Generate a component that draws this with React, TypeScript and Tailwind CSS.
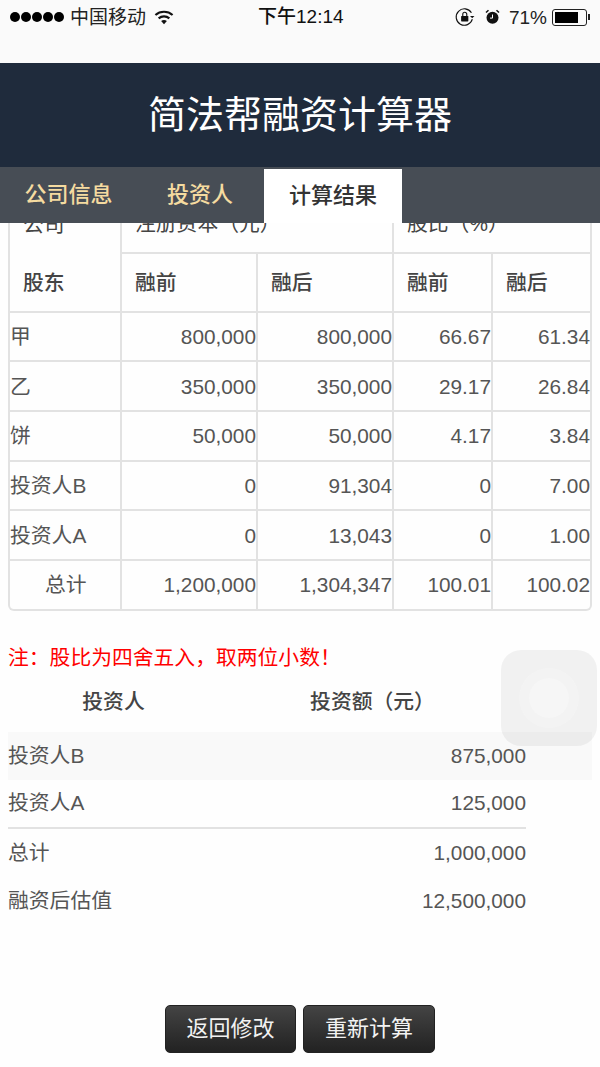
const CJK = "font-['Liberation_Sans','Noto_Sans_CJK_SC',sans-serif]";

const rows = [
  { name: "甲", v: ["800,000", "800,000", "66.67", "61.34"] },
  { name: "乙", v: ["350,000", "350,000", "29.17", "26.84"] },
  { name: "饼", v: ["50,000", "50,000", "4.17", "3.84"] },
  { name: "投资人B", v: ["0", "91,304", "0", "7.00"] },
  { name: "投资人A", v: ["0", "13,043", "0", "1.00"] },
];

const totals = ["1,200,000", "1,304,347", "100.01", "100.02"];

function StatusBar() {
  return (
    <div className="h-[63px] bg-[#fafafa] relative text-[19px] text-[#222]">
      <div className="h-[34px] flex items-center justify-between pl-[10px] pr-[10px]">
        <div className="flex items-center">
          <div className="flex gap-[1px]">
            {[0, 1, 2, 3, 4].map((i) => (
              <div key={i} className="w-[10px] h-[10px] rounded-full bg-black" />
            ))}
          </div>
          <span className="ml-[6px] leading-none">中国移动</span>
          <svg className="ml-[8px]" width="20" height="15" viewBox="0 0 18 14">
            <path d="M1 4.6C5.5.6 12.5.6 17 4.6" fill="none" stroke="#111" strokeWidth="2" />
            <path d="M4 7.8c2.9-2.5 7.1-2.5 10 0" fill="none" stroke="#111" strokeWidth="2" />
            <path d="M6.3 10.2c1.6-1.2 3.8-1.2 5.4 0L9 13.4z" fill="#111" />
          </svg>
        </div>
        <div className="absolute left-[258px] top-[6px] text-[19px] font-medium leading-[22px] text-[#111]">下午12:14</div>
        <div className="flex items-center">
          <svg width="20" height="20" viewBox="0 0 18 18">
            <path d="M14.8 5.2A7.4 7.4 0 1 0 15.6 11" fill="none" stroke="#111" strokeWidth="1" />
            <path d="M13.5 8h4l-2 2.2z" fill="#111" />
            <rect x="5.5" y="8" width="6.5" height="5" rx="0.6" fill="#111" />
            <path d="M7 8V6.5a1.8 1.8 0 0 1 3.6 0V8" fill="none" stroke="#111" strokeWidth="1" />
          </svg>
          <svg className="ml-[10px]" width="15" height="16" viewBox="0 0 15 16">
            <circle cx="7.5" cy="8.8" r="6" fill="#111" />
            <path d="M7.5 5.5v3.6H5" fill="none" stroke="#fff" strokeWidth="1" />
            <path d="M1 3.5 3.5 1.2M14 3.5 11.5 1.2" stroke="#111" strokeWidth="1.5" />
          </svg>
          <span className="ml-[9px] leading-none">71%</span>
          <div className="ml-[5px] w-[35px] h-[17px] rounded-[3px] border border-[#222] p-[2px]">
            <div className="w-[23px] h-full bg-black" />
          </div>
          <div className="ml-[1px] w-[2px] h-[6px] bg-[#222]" />
        </div>
      </div>
    </div>
  );
}

function SharesTable() {
  return (
    <div className="mx-[8px] grid grid-cols-[110px_136px_136px_99px_99px] grid-rows-[58.6px_59px_repeat(5,49.7px)_47.5px] border-2 border-t-0 border-[#e2e2e2] rounded-b-[6px] text-[20.8px] text-[#555]">
      <div className="flex items-center pl-[13px] text-[#444]">公司</div>
      <div className="col-span-2 flex items-center pl-[13px] border-l-2 border-b-2 border-[#e2e2e2] text-[#444]">注册资本（元）</div>
      <div className="col-span-2 flex items-center pl-[13px] border-l-2 border-b-2 border-[#e2e2e2] text-[#444]">股比（%）</div>

      <div className="flex items-center pl-[13px] border-b-2 border-[#e2e2e2] font-medium text-[#444]">股东</div>
      {["融前", "融后", "融前", "融后"].map((x, i) => (
        <div key={i} className="flex items-center pl-[13px] border-l-2 border-b-2 border-[#e2e2e2] font-medium text-[#444]">{x}</div>
      ))}

      {rows.map((r) => (
        <div key={r.name} className="contents">
          <div className="flex items-center border-b-2 border-[#e2e2e2]">{r.name}</div>
          {r.v.map((x, i) => (
            <div key={i} className="flex items-center justify-end border-l-2 border-b-2 border-[#e2e2e2]">{x}</div>
          ))}
        </div>
      ))}

      <div className="flex items-center pl-[35px]">总计</div>
      {totals.map((x) => (
        <div key={x} className="flex items-center justify-end border-l-2 border-[#e2e2e2]">{x}</div>
      ))}
    </div>
  );
}

export default function App() {
  return (
    <div className={`relative w-[600px] h-[1067px] overflow-hidden bg-[#fefefe] ${CJK}`}>
      <StatusBar />
      <div className="h-[104px] bg-[#1f2b3c] text-white text-[38px] flex items-center justify-center">
        简法帮融资计算器
      </div>
      <div className="relative z-10 h-[56px] -mb-[28px] bg-[#474d55] flex items-end pl-[1px] text-[22px] font-medium">
        <div className="h-[56px] pb-[2px] w-[135px] flex items-center justify-center text-[#f5dba0]">公司信息</div>
        <div className="h-[56px] pb-[2px] w-[128px] flex items-center justify-center text-[#f5dba0]">投资人</div>
        <div className="h-[54px] pb-[2px] w-[138px] bg-white flex items-center justify-center text-[#333]">计算结果</div>
      </div>
      <SharesTable />
      <div className="mt-[33px] ml-[8px] text-[20.8px] leading-[28px] text-[#ff0000]">注：股比为四舍五入，取两位小数！</div>
      <div className="mt-[12px] w-[526px] pl-[8px] h-[36px] flex items-center text-[20.8px] font-medium text-[#444]">
        <div className="w-[211px] text-center">投资人</div>
        <div className="w-[307px] text-center">投资额（元）</div>
      </div>
      <div className="mt-[12px] text-[20.8px] text-[#555]">
        <div className="mx-[8px] h-[48px] bg-[#f9f9f9] flex items-center">
          <div className="w-[518px] flex justify-between"><span>投资人B</span><span>875,000</span></div>
        </div>
        <div className="ml-[8px] w-[518px] h-[49px] flex items-center justify-between border-b-2 border-[#e2e2e2]"><span>投资人A</span><span>125,000</span></div>
        <div className="ml-[8px] w-[518px] h-[48px] flex items-center justify-between"><span>总计</span><span>1,000,000</span></div>
        <div className="ml-[8px] w-[518px] h-[48px] flex items-center justify-between"><span>融资后估值</span><span>12,500,000</span></div>
      </div>
      <div className="mt-[80px] flex justify-center gap-[7px] text-[22px] text-[#f2f2f2]">
        <button className="w-[131px] h-[48px] rounded-[5px] bg-gradient-to-b from-[#444] to-[#222] border border-[#222]">返回修改</button>
        <button className="w-[132px] h-[48px] rounded-[5px] bg-gradient-to-b from-[#444] to-[#222] border border-[#222]">重新计算</button>
      </div>
      <div className="absolute left-[501px] top-[650px] w-[96px] h-[96px] rounded-[20px] bg-black/5 flex items-center justify-center">
        <div className="w-[60px] h-[60px] rounded-full bg-white/20 flex items-center justify-center">
          <div className="w-[40px] h-[40px] rounded-full bg-white/25" />
        </div>
      </div>
    </div>
  );
}
